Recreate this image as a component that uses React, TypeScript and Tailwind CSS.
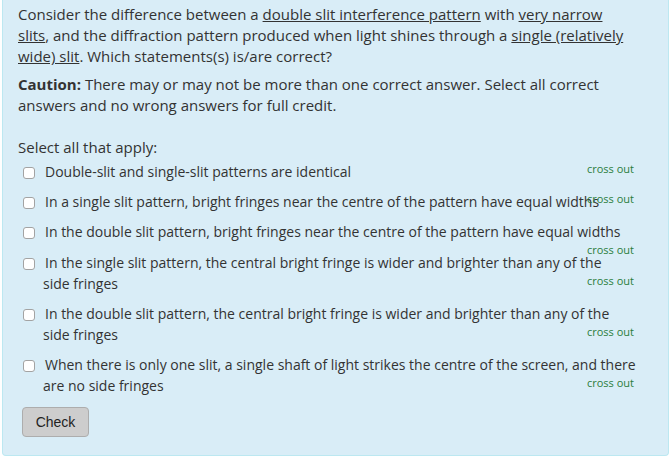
import React from 'react';

type Option = {
  lines: string[];
  below?: boolean;
};

const options: Option[] = [
  { lines: ['Double-slit and single-slit patterns are identical'] },
  { lines: ['In a single slit pattern, bright fringes near the centre of the pattern have equal widths'] },
  { lines: ['In the double slit pattern, bright fringes near the centre of the pattern have equal widths'], below: true },
  { lines: ['In the single slit pattern, the central bright fringe is wider and brighter than any of the', 'side fringes'] },
  { lines: ['In the double slit pattern, the central bright fringe is wider and brighter than any of the', 'side fringes'] },
  { lines: ['When there is only one slit, a single shaft of light strikes the centre of the screen, and there', 'are no side fringes'] },
];

function OptionRow({ option }: { option: Option }) {
  return (
    <li className={option.below ? 'relative mb-[10px] last:mb-0' : 'relative mb-[9px] last:mb-0'}>
      <label className="flex items-start text-[14px] leading-[21px]">
        <input
          type="checkbox"
          className="appearance-none mt-[6px] ml-[5px] mr-[10px] h-[12px] w-[12px] shrink-0 rounded-[3px] border border-[#a3a3a3] bg-white"
        />
        <span className="whitespace-nowrap">
          {option.lines.map((line, i) => (
            <span key={i} className={i > 0 ? 'block -ml-[2px]' : 'block'}>
              {line}
            </span>
          ))}
        </span>
      </label>
      <span
        className={
          option.below
            ? 'absolute right-[19px] top-full text-[11px] leading-[15px] text-[#2a7d3c]'
            : 'absolute right-[19px] bottom-[6px] text-[11px] leading-[15px] text-[#2a7d3c]'
        }
      >
        cross out
      </span>
    </li>
  );
}

export default function App() {
  return (
    <div className="min-h-screen bg-white pl-[2px] pr-[3px]" style={{ fontFamily: '"Open Sans", sans-serif' }}>
      <div className="rounded-b-[4px] border border-t-0 border-[#bce8f1] bg-[#d9edf7] px-[15px] pt-[4px] pb-[18px] text-[15px] leading-[21px] text-[#333]">
        <p>
          Consider the difference between a <span className="underline">double slit interference pattern</span> with{' '}
          <span className="underline">very narrow</span>
          <br />
          <span className="underline">slits</span>, and the diffraction pattern produced when light shines through a{' '}
          <span className="underline">single (relatively</span>
          <br />
          <span className="underline">wide) slit</span>. Which statements(s) is/are correct?
        </p>
        <p className="mt-[7px]">
          <strong className="font-bold">Caution:</strong> There may or may not be more than one correct answer. Select all correct
          <br />
          answers and no wrong answers for full credit.
        </p>
        <p className="mt-[21px]">Select all that apply:</p>
        <ul className="mt-[3px]">
          {options.map((o, i) => (
            <OptionRow key={i} option={o} />
          ))}
        </ul>
        <button
          className="mt-[11px] ml-[4px] h-[30px] w-[67px] rounded-[4px] border border-[#adadad] bg-[#cdcdcd] text-[14px] text-[#222]"
          style={{ fontFamily: '"Liberation Sans", Arial, sans-serif' }}
        >
          Check
        </button>
      </div>
    </div>
  );
}
